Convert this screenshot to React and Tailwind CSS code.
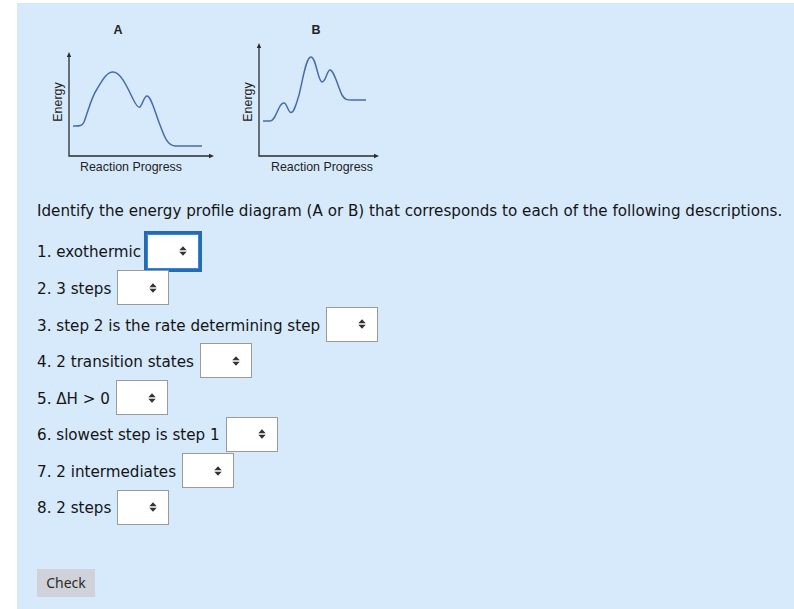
import React from 'react';

const ROWS = [
  { label: '1. exothermic', focused: true },
  { label: '2. 3 steps' },
  { label: '3. step 2 is the rate determining step' },
  { label: '4. 2 transition states' },
  { label: '5. ΔH > 0' },
  { label: '6. slowest step is step 1' },
  { label: '7. 2 intermediates' },
  { label: '8. 2 steps' },
];

function Arrows() {
  return (
    <svg width="8" height="10" viewBox="0 0 8 10" className="block">
      <path d="M0.3 4.2 L4 0.3 L7.7 4.2 Z M0.3 5.8 L4 9.7 L7.7 5.8 Z" fill="#333" />
    </svg>
  );
}

function Select({ focused }) {
  return (
    <div
      className={
        'flex items-center justify-end w-[52px] h-[35px] bg-white pr-[11px] ' +
        (focused
          ? 'border border-[#1e8fff] outline-[3px] outline-solid outline-[#2d6aa5]'
          : 'border border-[#9a9a9a]')
      }
    >
      <Arrows />
    </div>
  );
}

function Diagrams() {
  const axis = '#2b2b2b';
  const curve = '#4a6bab';
  return (
    <svg width="380" height="182" viewBox="17 3 380 182" className="block">
      <g fontFamily="'Liberation Sans', Arial, sans-serif" fill="#222">
        <text x="118" y="34" fontSize="12.5" fontWeight="bold" textAnchor="middle">A</text>
        <text x="316" y="34" fontSize="12.5" fontWeight="bold" textAnchor="middle">B</text>
        <text x="131" y="170.5" fontSize="12.4" textAnchor="middle">Reaction Progress</text>
        <text x="322" y="170.5" fontSize="12.4" textAnchor="middle">Reaction Progress</text>
        <text x="61.5" y="102" fontSize="12.4" textAnchor="middle" transform="rotate(-90 61.5 102)">Energy</text>
        <text x="251.5" y="102" fontSize="12.4" textAnchor="middle" transform="rotate(-90 251.5 102)">Energy</text>
      </g>
      {/* axes A */}
      <path d="M69 56 L69 156 L210 156" stroke={axis} strokeWidth="1.3" fill="none" />
      <path d="M69 52 L66.8 57 L71.2 57 Z M214 156 L209 153.8 L209 158.2 Z" fill={axis} />
      {/* axes B */}
      <path d="M259 47 L259 156 L375 156" stroke={axis} strokeWidth="1.3" fill="none" />
      <path d="M259 43 L256.8 48 L261.2 48 Z M379 156 L374 153.8 L374 158.2 Z" fill={axis} />
      {/* curve A */}
      <path
        d="M73 126 C79 126 82 126.5 84 122 C88 112 91 98 97 89 C103 79 107 72 113 72 C121 72 128 89 133 99 C136 105 138 108 140 107 C143 104 144 96 147 96 C151 96 155 112 160 125 C164 136 167 145 175 146 L202 146"
        stroke={curve}
        strokeWidth="1.5"
        fill="none"
      />
      {/* curve B */}
      <path
        d="M263 121 L270 121 C274 121 276 114 279 108 C281 104 282 103 284 103 C287 103 288 112.5 291 112.5 C294 112.5 296 105 299 95 C303 79 306 57 311 57 C316 57 318 82 322 82 C326 82 327 70 330 70 C334 70 338 87 342 95 C345 100 347 100 352 100 L366 100"
        stroke={curve}
        strokeWidth="1.5"
        fill="none"
      />
    </svg>
  );
}

export default function App() {
  return (
    <div className="w-[794px] h-[609px] bg-white overflow-hidden">
      <div className="ml-[17px] mt-[3px] h-[606px] bg-[#d7eafc] text-[#141414] font-['DejaVu_Sans',Verdana,sans-serif]">
        <Diagrams />
        <p className="pl-[20px] text-[15.15px] leading-[20px] mt-[16px]">
          Identify the energy profile diagram (A or B) that corresponds to each of the following descriptions.
        </p>
        <div className="pl-[20px] mt-[12px] flex flex-col">
          {ROWS.map((r, i) => (
            <div key={i} className="flex items-center gap-[6px] h-[36.57px] text-[15.15px]">
              <span className="pt-[3px]">{r.label}</span>
              <Select focused={r.focused} />
            </div>
          ))}
        </div>
        <div className="pl-[20px] mt-[43px]">
          <button className="w-[58px] h-[28px] bg-[#cfd3d9] text-[#2a2a2a] text-[14px] font-['Noto_Sans',sans-serif]">
            Check
          </button>
        </div>
      </div>
    </div>
  );
}
